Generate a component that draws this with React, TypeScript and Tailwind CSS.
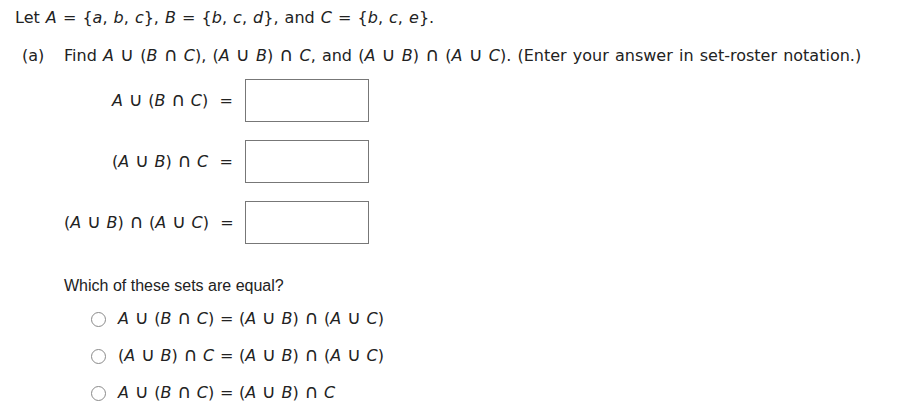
function I({ children }: { children: React.ReactNode }) {
  return <i>{children}</i>;
}

function Cup() {
  return <span className="text-[19px] leading-none">∪</span>;
}

function Cap() {
  return <span className="text-[19px] leading-none">∩</span>;
}

const rows = [
  <>
    <I>A</I> <Cup /> (<I>B</I> <Cap /> <I>C</I>)
  </>,
  <>
    (<I>A</I> <Cup /> <I>B</I>) <Cap /> <I>C</I>
  </>,
  <>
    (<I>A</I> <Cup /> <I>B</I>) <Cap /> (<I>A</I> <Cup /> <I>C</I>)
  </>,
];

const options = [
  <>
    <I>A</I> <Cup /> (<I>B</I> <Cap /> <I>C</I>) = (<I>A</I> <Cup /> <I>B</I>) <Cap /> (<I>A</I> <Cup /> <I>C</I>)
  </>,
  <>
    (<I>A</I> <Cup /> <I>B</I>) <Cap /> <I>C</I> = (<I>A</I> <Cup /> <I>B</I>) <Cap /> (<I>A</I> <Cup /> <I>C</I>)
  </>,
  <>
    <I>A</I> <Cup /> (<I>B</I> <Cap /> <I>C</I>) = (<I>A</I> <Cup /> <I>B</I>) <Cap /> <I>C</I>
  </>,
];

export default function App() {
  return (
    <div className="w-[902px] h-[414px] bg-white text-[#222] text-[16px] [word-spacing:0.6px] font-['DejaVu_Sans',sans-serif] pl-[15px] pt-[7px]">
      <p className="leading-[22px] whitespace-nowrap [word-spacing:1px]">
        Let <I>A</I> = {"{"}<I>a</I>, <I>b</I>, <I>c</I>{"}"}, <I>B</I> = {"{"}<I>b</I>, <I>c</I>,{" "}
        <I>d</I>{"}"}, and <I>C</I> = {"{"}<I>b</I>, <I>c</I>, <I>e</I>{"}"}.
      </p>

      <div className="flex mt-[16px] ml-[7px]">
        <span className="w-[42px] leading-[22px]">(a)</span>
        <div>
          <p className="leading-[22px] whitespace-nowrap [word-spacing:1.1px]">
            Find <I>A</I> <Cup /> (<I>B</I> <Cap /> <I>C</I>), (<I>A</I> <Cup /> <I>B</I>) <Cap /> <I>C</I>, and (
            <I>A</I> <Cup /> <I>B</I>) <Cap /> (<I>A</I> <Cup /> <I>C</I>). (Enter your answer in set-roster
            notation.)
          </p>

          <div className="flex flex-col gap-[18px] mt-[12px]">
            {rows.map((r, i) => (
              <div key={i} className="flex items-center">
                <div className="w-[169px] text-right whitespace-nowrap leading-[22px]">
                  {r}&nbsp; =
                </div>
                <div className="ml-[12px] w-[124px] h-[43px] border border-[#777]" />
              </div>
            ))}
          </div>

          <p className="mt-[32px] leading-[20px] font-['Liberation_Sans',sans-serif] text-[16px] [word-spacing:0px]">
            Which of these sets are equal?
          </p>
          <div className="flex flex-col gap-[15px] mt-[12px] ml-[27px]">
            {options.map((o, i) => (
              <label key={i} className="flex items-center gap-[12px] leading-[22px]">
                <span className="w-[15px] h-[15px] rounded-full border border-[#8a8a8a] bg-white" />
                <span className="whitespace-nowrap">{o}</span>
              </label>
            ))}
          </div>
        </div>
      </div>
    </div>
  );
}
